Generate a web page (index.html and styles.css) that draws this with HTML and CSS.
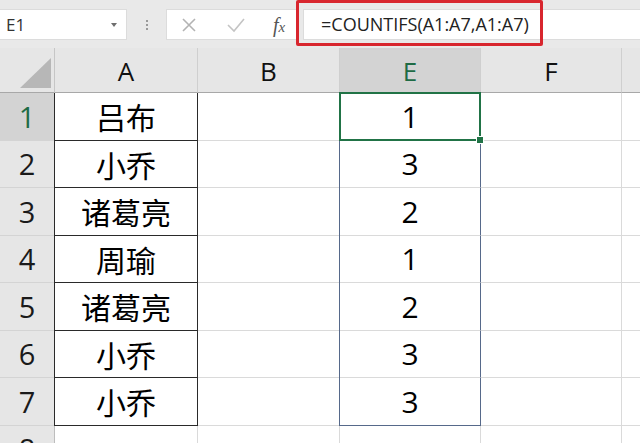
FILE: index.html
```html
<!DOCTYPE html>
<html lang="zh">
<head>
<meta charset="utf-8">
<link rel="stylesheet" href="styles.css">
</head>
<body>
<div class="toolbar">
  <div class="namebox"><span class="nb-text">E1</span><span class="caret"></span></div>
  <div class="sep"><i></i><i></i><i></i></div>
  <div class="tools">
    <svg class="ico" width="20" height="20" viewBox="0 0 20 20"><path d="M4 4 L16 16 M16 4 L4 16" stroke="#b3b3b3" stroke-width="1.6" fill="none"/></svg>
    <svg class="ico" width="22" height="20" viewBox="0 0 22 20"><path d="M3 10 L9 16 L19 4" stroke="#c4c4c4" stroke-width="1.6" fill="none"/></svg>
    <span class="fx">f<sub>x</sub></span>
  </div>
  <div class="formula">=COUNTIFS(A1:A7,A1:A7)</div>
  <div class="redbox"></div>
</div>
<div class="sheet">
  <div class="corner"><span class="tri"></span></div>
  <div class="ch">A</div>
  <div class="ch">B</div>
  <div class="ch sel">E</div>
  <div class="ch">F</div>
  <div class="ch last"></div>

  <div class="rh sel">1</div><div class="c a">吕布</div><div class="c"></div><div class="c e e1">1<span class="handle"></span></div><div class="c"></div><div class="c last"></div>
  <div class="rh">2</div><div class="c a">小乔</div><div class="c"></div><div class="c e er">3</div><div class="c"></div><div class="c last"></div>
  <div class="rh">3</div><div class="c a">诸葛亮</div><div class="c"></div><div class="c e er">2</div><div class="c"></div><div class="c last"></div>
  <div class="rh">4</div><div class="c a">周瑜</div><div class="c"></div><div class="c e er">1</div><div class="c"></div><div class="c last"></div>
  <div class="rh">5</div><div class="c a">诸葛亮</div><div class="c"></div><div class="c e er">2</div><div class="c"></div><div class="c last"></div>
  <div class="rh">6</div><div class="c a">小乔</div><div class="c"></div><div class="c e er">3</div><div class="c"></div><div class="c last"></div>
  <div class="rh">7</div><div class="c a">小乔</div><div class="c"></div><div class="c e er elast">3</div><div class="c"></div><div class="c last"></div>
  <div class="rh">8</div><div class="c"></div><div class="c"></div><div class="c"></div><div class="c"></div><div class="c last"></div>
</div>
</body>
</html>
```
FILE: styles.css
```css
html, body {
  margin: 0;
  padding: 0;
}
body {
  width: 640px;
  height: 443px;
  overflow: hidden;
  background: #ffffff;
  font-family: "Noto Sans", "Noto Sans CJK SC", sans-serif;
  color: #000;
}
.toolbar {
  position: relative;
  height: 48px;
  box-sizing: border-box;
  padding-top: 9px;
  background: #e9e9e9;
  display: flex;
  align-items: flex-start;
}
.namebox {
  width: 127px;
  height: 31px;
  box-sizing: border-box;
  background: #fff;
  border: 1px solid #dcdcdc;
  border-left: none;
  display: flex;
  align-items: center;
  justify-content: space-between;
  padding: 0 9px 0 6px;
  font-family: "Open Sans", "Noto Sans", sans-serif;
  font-size: 17px;
  color: #333;
}
.caret {
  width: 0;
  height: 0;
  border-left: 3px solid transparent;
  border-right: 3px solid transparent;
  border-top: 4px solid #6e6e6e;
}
.sep {
  width: 39px;
  height: 31px;
  display: flex;
  flex-direction: column;
  align-items: center;
  justify-content: center;
  gap: 2px;
}
.sep i {
  display: block;
  width: 2px;
  height: 2px;
  background: #9a9a9a;
}
.tools {
  width: 131px;
  height: 31px;
  box-sizing: border-box;
  background: #fff;
  border: 1px solid #dcdcdc;
  display: flex;
  align-items: center;
  padding-left: 12px;
}
.tools .ico {
  margin-right: 26px;
}
.tools .ico + .ico {
  margin-right: 26px;
}
.fx {
  font-family: "Liberation Serif", serif;
  font-style: italic;
  font-size: 20px;
  color: #555;
  line-height: 1;
}
.fx sub {
  font-size: 15px;
  vertical-align: 0;
}
.formula {
  flex: 1;
  height: 31px;
  box-sizing: border-box;
  margin-left: 6px;
  background: #fff;
  border: 1px solid #dcdcdc;
  border-right: none;
  padding-left: 17px;
  line-height: 29px;
  font-family: "Open Sans", "Noto Sans", sans-serif;
  font-size: 18px;
  color: #222;
}
.redbox {
  position: absolute;
  left: 296px;
  top: 0px;
  width: 247px;
  height: 46px;
  box-sizing: border-box;
  border: 3px solid #d8262e;
  border-radius: 2px;
}
.sheet {
  display: grid;
  grid-template-columns: 55px 143px 142px 141px 141px 18px;
  grid-template-rows: 45px repeat(8, 47.5px);
}
.sheet > div {
  box-sizing: border-box;
}
.corner {
  background: #e6e6e6;
  border-right: 1px solid #c6c6c6;
  border-bottom: 1px solid #a8a8a8;
  position: relative;
}
.tri {
  position: absolute;
  right: 3px;
  bottom: 4px;
  width: 0;
  height: 0;
  border-left: 31px solid transparent;
  border-bottom: 30px solid #b7b7b7;
}
.ch {
  background: #e6e6e6;
  border-right: 1px solid #cfcfcf;
  border-bottom: 1px solid #a8a8a8;
  display: flex;
  align-items: center;
  justify-content: center;
  font-family: "Open Sans", "Noto Sans", sans-serif;
  font-size: 26px;
  padding-top: 2px;
  color: #111;
}
.ch.sel {
  background: #d3d3d3;
  color: #1e6b45;
}
.ch.last {
  border-right: none;
}
.rh {
  background: #e6e6e6;
  border-right: 1px solid #bdbdbd;
  border-bottom: 1px solid #d4d4d4;
  display: flex;
  align-items: center;
  justify-content: center;
  font-family: "Open Sans", "Noto Sans", sans-serif;
  font-size: 29px;
  color: #1a1a1a;
}
.rh.sel {
  background: #d3d3d3;
  color: #1e6b45;
  border-right: 1px solid #217346;
}
.c {
  border-right: 1px solid #dadada;
  border-bottom: 1px solid #dadada;
  display: flex;
  align-items: center;
  justify-content: center;
  font-size: 28px;
  font-family: "Noto Sans", "Noto Sans CJK SC", sans-serif;
  white-space: nowrap;
}
.c.last {
  border-right: none;
}
.c.a {
  font-family: "Noto Sans CJK SC", sans-serif;
  font-size: 30px;
  border-right: 1px solid #2a2a2a;
  border-bottom: 1px solid #2a2a2a;
  box-shadow: -1px 0 0 #2a2a2a;
}
.c.e {
  font-size: 30px;
  font-family: "Open Sans", "Noto Sans", sans-serif;
}
.c.er {
  border-right: 1px solid #56698a;
  box-shadow: -1px 0 0 #56698a;
}
.c.elast {
  border-bottom: 1px solid #56698a;
}
.c.e1 {
  position: relative;
}
.c.e1::after {
  content: "";
  position: absolute;
  left: -1px;
  top: -1px;
  right: -1px;
  bottom: -1px;
  border: 2px solid #217346;
  pointer-events: none;
}
.handle {
  position: absolute;
  right: -4px;
  bottom: -4px;
  width: 6px;
  height: 6px;
  background: #217346;
  border: 1px solid #fff;
  z-index: 2;
}
```
